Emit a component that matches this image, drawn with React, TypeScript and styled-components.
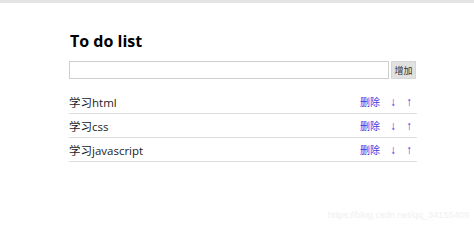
import styled, { createGlobalStyle } from "styled-components";

const GlobalStyle = createGlobalStyle`
  html, body {
    margin: 0;
    padding: 0;
    background: #fff;
  }
  body {
    font-family: "Open Sans", "Noto Sans CJK SC", sans-serif;
    color: #111;
  }
`;

const Page = styled.div`
  position: relative;
  width: 474px;
  height: 226px;
  overflow: hidden;
  border-top: 3px solid #e4e4e4;
  box-sizing: border-box;
`;

const Container = styled.div`
  width: 348px;
  padding: 28px 0 0 69px;
`;

const Title = styled.h1`
  margin: 0 0 10px 1px;
  font-size: 16px;
  line-height: 20px;
  font-weight: 700;
  color: #000;
`;

const Form = styled.div`
  display: flex;
  align-items: center;
  gap: 2px;
`;

const TextInput = styled.input`
  width: 320px;
  height: 18px;
  box-sizing: border-box;
  border: 1px solid #cfcfcf;
  padding: 0 4px;
  outline: none;
`;

const AddButton = styled.button`
  width: 25px;
  height: 18px;
  padding: 0;
  border: 1px solid #d6d6d6;
  background: #e1e1e1;
  font-family: "Noto Sans CJK SC", sans-serif;
  font-size: 9px;
  color: #333;
`;

const List = styled.ul`
  list-style: none;
  margin: 11px 0 0;
  padding: 0;
`;

const Row = styled.li`
  display: flex;
  align-items: center;
  justify-content: space-between;
  height: 24px;
  box-sizing: border-box;
  border-bottom: 1.5px solid #dedede;
  font-size: 11.5px;
  color: #222;
`;

const Actions = styled.div`
  display: flex;
  align-items: center;
  gap: 10px;
  padding-right: 5px;
`;

const Link = styled.a<{ $arrow?: boolean }>`
  color: #3a3ae6;
  font-size: ${(p) => (p.$arrow ? "12px" : "10px")};
  text-decoration: none;
  font-family: ${(p) =>
    p.$arrow ? '"Liberation Sans", sans-serif' : '"Noto Sans CJK SC", sans-serif'};
`;

const Watermark = styled.div`
  position: absolute;
  right: 5px;
  bottom: 6px;
  font-family: "Liberation Sans", sans-serif;
  font-size: 9.2px;
  color: #f0f0f0;
`;

const items = ["学习html", "学习css", "学习javascript"];

const App = () => (
  <Page>
    <GlobalStyle />
    <Container>
      <Title>To do list</Title>
      <Form>
        <TextInput type="text" />
        <AddButton>增加</AddButton>
      </Form>
      <List>
        {items.map((item) => (
          <Row key={item}>
            <span>{item}</span>
            <Actions>
              <Link>删除</Link>
              <Link $arrow>↓</Link>
              <Link $arrow>↑</Link>
            </Actions>
          </Row>
        ))}
      </List>
    </Container>
    <Watermark>https://blog.csdn.net/qq_34155409</Watermark>
  </Page>
);

export default App;
